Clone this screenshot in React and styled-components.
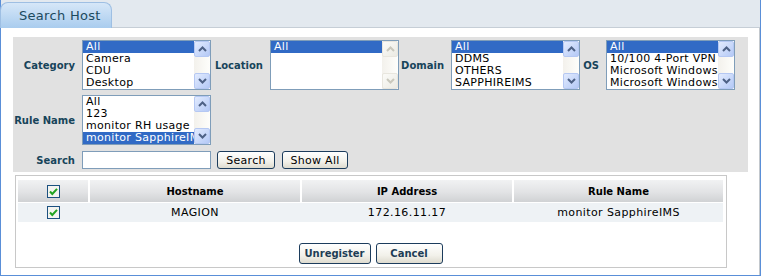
import React from "react";
import styled, { createGlobalStyle } from "styled-components";

const GlobalStyle = createGlobalStyle`
  html, body { margin: 0; padding: 0; background: #ffffff; }
  body { font-family: "DejaVu Sans", Verdana, sans-serif; }
`;

const Frame = styled.div`
  width: 761px;
  height: 276px;
  box-sizing: border-box;
  border-left: 1px solid #5a8fd8;
  border-right: 1px solid #5a8fd8;
  border-bottom: 1px solid #5a8fd8;
  background: #e3e9ef;
  display: flex;
  flex-direction: column;
`;

const TabBar = styled.div`
  height: 27px;
  display: flex;
  align-items: flex-end;
  margin-left: -1px;
`;

const Tab = styled.div`
  position: relative;
  z-index: 1;
  width: 112px;
  height: 26px;
  margin-bottom: -1px;
  box-sizing: border-box;
  border: 1px solid #9ebfe3;
  border-bottom: none;
  border-radius: 8px 8px 0 0;
  background: linear-gradient(#d6e7f8, #a9ccee);
  color: #1b4a5e;
  font-size: 13px;
  letter-spacing: 0.3px;
  padding-left: 18px;
  line-height: 25px;
`;

const Body = styled.div`
  flex: 1;
  display: flex;
`;

const Panel = styled.div`
  width: 748px;
  background: #ffffff;
  border-top: 1px solid #c6ced6;
  border-right: 1px solid #c3c8cd;
  padding: 9px 11px 0 12px;
  box-sizing: content-box;
`;

const FilterPanel = styled.div`
  background: #e1e1e1;
  display: grid;
  grid-template-columns: 69px 129px 59px 129px 52px 129px 26px 129px;
  grid-template-rows: 50px 50px 20px;
  row-gap: 5px;
  padding: 3px 2px 2px 0;
`;

const Label = styled.div`
  display: flex;
  align-items: center;
  justify-content: flex-end;
  padding-right: 7px;
  font-size: 10px;
  font-weight: bold;
  color: #17445a;
  white-space: nowrap;
`;

const ListBox = styled.div`
  display: flex;
  height: 50px;
  box-sizing: border-box;
  border: 1px solid #7f9db9;
  background: #ffffff;
`;

const Options = styled.div`
  flex: 1;
  overflow: hidden;
`;

const Option = styled.div`
  height: 12px;
  line-height: 12px;
  padding-left: 3px;
  font-size: 11px;
  letter-spacing: 0.3px;
  white-space: nowrap;
  overflow: hidden;
  background: ${(p) => (p.$selected ? "#316ac5" : "transparent")};
  color: ${(p) => (p.$selected ? "#ffffff" : "#000000")};
`;

const Scrollbar = styled.div`
  width: 16px;
  display: flex;
  flex-direction: column;
  justify-content: space-between;
  background: linear-gradient(90deg, #f3f1ec, #fefefb);
`;

const ArrowButton = styled.div`
  height: 16px;
  box-sizing: border-box;
  border: 1px solid ${(p) => (p.$disabled ? "#e8e6de" : "#b5c8f3")};
  border-radius: 2px;
  background: ${(p) =>
    p.$disabled
      ? "linear-gradient(135deg, #fbfbf8, #ebeae3)"
      : "linear-gradient(135deg, #e2ebfe, #b4c9f6)"};
  display: flex;
  align-items: center;
  justify-content: center;
`;

const SearchRow = styled.div`
  grid-column: 2 / 9;
  display: flex;
  align-items: center;
  gap: 6px;
`;

const TextInput = styled.input`
  width: 129px;
  height: 18px;
  box-sizing: border-box;
  border: 1px solid #7f9db9;
  margin: 0;
  padding: 0 3px;
  font-size: 11px;
  font-family: inherit;
`;

const Button = styled.button`
  height: ${(p) => (p.$big ? "21px" : "18px")};
  width: ${(p) => p.$w}px;
  box-sizing: border-box;
  border: 1px solid #1c3c5c;
  border-radius: 3px;
  background: linear-gradient(#ffffff, #f2f1ea 60%, #dedbcf);
  font-family: inherit;
  font-size: ${(p) => (p.$big ? "10px" : "11px")};
  font-weight: ${(p) => (p.$big ? "bold" : "normal")};
  letter-spacing: ${(p) => (p.$big ? "0" : "0.3px")};
  color: ${(p) => (p.$big ? "#1d3d55" : "#000000")};
  padding: 0;
  margin: 0 0 0 ${(p) => p.$ml || 0}px;
`;

const ResultBox = styled.div`
  margin: 3px 10px 0 2px;
  width: 712px;
  box-sizing: border-box;
  border: 1px solid #c8c8c8;
  padding: 4px 3px 3px 2px;
`;

const Row = styled.div`
  display: grid;
  grid-template-columns: 70px 210px 210px 209px;
  column-gap: 2px;
  height: ${(p) => p.$h}px;
  background: ${(p) => p.$bg};
  margin-bottom: ${(p) => p.$mb || 0}px;
`;

const HeadCell = styled.div`
  display: flex;
  align-items: center;
  justify-content: center;
  background: linear-gradient(#f1f2f3, #e2e3e5 55%, #d0d2d4);
  font-size: 10px;
  font-weight: bold;
  color: #000000;
`;

const Cell = styled.div`
  display: flex;
  align-items: center;
  justify-content: center;
  font-size: 11px;
  letter-spacing: 0.4px;
  color: #000000;
`;

const Actions = styled.div`
  margin-top: 21px;
  display: flex;
  justify-content: center;
  gap: 5px;
`;

const Chevron = ({ up, disabled }) => (
  <svg width="9" height="6" viewBox="0 0 9 6">
    <path
      d={up ? "M1 5 L4.5 1.5 L8 5" : "M1 1 L4.5 4.5 L8 1"}
      fill="none"
      stroke={disabled ? "#c9c8bd" : "#4d6185"}
      strokeWidth="2"
    />
  </svg>
);

const Check = () => (
  <svg width="13" height="13" viewBox="0 0 13 13">
    <rect x="0.5" y="0.5" width="12" height="12" fill="#f4f4f0" stroke="#1c5180" />
    <path d="M3 6.5 L5.3 9 L10 3.8" fill="none" stroke="#21a321" strokeWidth="2" />
  </svg>
);

const Select = ({ items, selected, disabled }) => (
  <ListBox>
    <Options>
      {items.map((it, i) => (
        <Option key={it} $selected={i === selected}>
          {it}
        </Option>
      ))}
    </Options>
    <Scrollbar>
      <ArrowButton $disabled={disabled}>
        <Chevron up disabled={disabled} />
      </ArrowButton>
      <ArrowButton $disabled={disabled}>
        <Chevron disabled={disabled} />
      </ArrowButton>
    </Scrollbar>
  </ListBox>
);

const App = () => {
  return (
    <>
      <GlobalStyle />
      <Frame>
        <TabBar>
          <Tab>Search Host</Tab>
        </TabBar>
        <Body>
          <Panel>
            <FilterPanel>
              <Label>Category</Label>
              <Select items={["All", "Camera", "CDU", "Desktop"]} selected={0} />
              <Label>Location</Label>
              <Select items={["All"]} selected={0} disabled />
              <Label>Domain</Label>
              <Select items={["All", "DDMS", "OTHERS", "SAPPHIREIMS"]} selected={0} />
              <Label>OS</Label>
              <Select
                items={["All", "10/100 4-Port VPN", "Microsoft Windows Server", "Microsoft Windows XP"]}
                selected={0}
              />

              <Label>Rule Name</Label>
              <Select
                items={["All", "123", "monitor RH usage", "monitor SapphireIMS"]}
                selected={3}
              />
              <div style={{ gridColumn: "3 / 9" }} />

              <Label>Search</Label>
              <SearchRow>
                <TextInput type="text" />
                <Button $w={58}>Search</Button>
                <Button $w={66} $ml={1}>Show All</Button>
              </SearchRow>
            </FilterPanel>

            <ResultBox>
              <Row $h={22} $bg="#ffffff" $mb={1}>
                <HeadCell>
                  <Check />
                </HeadCell>
                <HeadCell>Hostname</HeadCell>
                <HeadCell>IP Address</HeadCell>
                <HeadCell>Rule Name</HeadCell>
              </Row>
              <Row $h={19} $bg="#eef2f5">
                <Cell>
                  <Check />
                </Cell>
                <Cell>MAGION</Cell>
                <Cell>172.16.11.17</Cell>
                <Cell>monitor SapphireIMS</Cell>
              </Row>
              <Actions>
                <Button $big $w={72}>Unregister</Button>
                <Button $big $w={67}>Cancel</Button>
              </Actions>
            </ResultBox>
          </Panel>
        </Body>
      </Frame>
    </>
  );
};

export default App;
